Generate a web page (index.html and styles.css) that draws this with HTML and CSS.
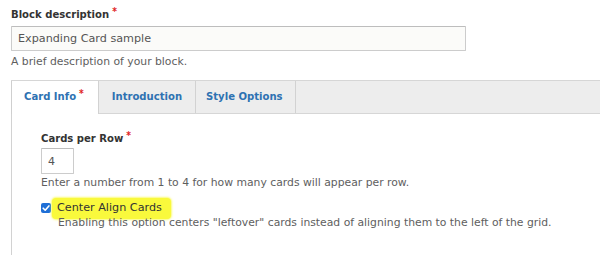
FILE: index.html
```html
<!DOCTYPE html>
<html>
<head>
<meta charset="utf-8">
<link rel="stylesheet" href="styles.css">
</head>
<body>
<div class="page">
  <div class="field">
    <label class="label">Block description<span class="req">*</span></label>
    <input class="text-input" type="text" value="Expanding Card sample">
    <div class="desc">A brief description of your block.</div>
  </div>
  <div class="tabs-wrap">
    <ul class="tabs">
      <li class="tab active"><a class="tab-link">Card Info<span class="req">*</span></a></li>
      <li class="tab tab-2"><a class="tab-link">Introduction</a></li>
      <li class="tab tab-3"><a class="tab-link">Style Options</a></li>
      <li class="tab-fill"></li>
    </ul>
    <div class="panel">
      <label class="label">Cards per Row<span class="req">*</span></label>
      <input class="num-input" type="text" value="4">
      <div class="desc desc-num">Enter a number from 1 to 4 for how many cards will appear per row.</div>
      <div class="check-row">
        <svg class="checkbox" width="10" height="10" viewBox="0 0 10 10">
          <rect x="0" y="0" width="10" height="10" rx="2" fill="#1f6fd6"/>
          <path d="M2.2 5.2 L4.2 7.2 L7.9 2.9" fill="none" stroke="#fff" stroke-width="1.6" stroke-linecap="round" stroke-linejoin="round"/>
        </svg>
        <span class="highlight">Center Align Cards</span>
      </div>
      <div class="desc desc-check">Enabling this option centers "leftover" cards instead of aligning them to the left of the grid.</div>
    </div>
  </div>
</div>
</body>
</html>
```

FILE: styles.css
```css
html, body {
  margin: 0;
  padding: 0;
  background: #ffffff;
}

body {
  width: 600px;
  height: 255px;
  overflow: hidden;
  font-family: "DejaVu Sans", sans-serif;
  color: #333333;
}

.page {
  padding-top: 7px;
}

.field {
  padding-left: 11px;
  display: flex;
  flex-direction: column;
  align-items: flex-start;
}

.label {
  display: block;
  font-family: "DejaVu Sans Condensed", "DejaVu Sans", sans-serif;
  font-stretch: condensed;
  font-weight: bold;
  font-size: 11.2px;
  line-height: 16px;
  color: #333333;
}

.req {
  color: #e0241b;
  font-family: "DejaVu Sans", sans-serif;
  font-weight: bold;
  font-size: 10px;
  margin-left: 3px;
  vertical-align: 3px;
  line-height: 0;
}

.text-input {
  box-sizing: border-box;
  margin: 3px 0 0 0;
  width: 455px;
  height: 25px;
  padding: 0 6px;
  border: 1px solid #cccccc;
  border-top-color: #bdbdbd;
  border-radius: 1px;
  background: #fbfbf9;
  font-family: "DejaVu Sans", sans-serif;
  font-size: 11.2px;
  color: #555555;
  outline: none;
}

.desc {
  margin-top: 4px;
  font-size: 10.8px;
  line-height: 14px;
  color: #5e5e5e;
}

.tabs-wrap {
  margin-top: 11px;
  margin-left: 11px;
}

.tabs {
  list-style: none;
  margin: 0;
  padding: 0;
  display: flex;
  border-top: 1px solid #d6d6d6;
  border-bottom: 1px solid #d6d6d6;
  background: #ededed;
}

.tab {
  height: 32px;
  border-right: 1px solid #d2d2d2;
  display: flex;
  align-items: center;
}

.tab.active {
  background: #ffffff;
  border-left: 1px solid #cfcfcf;
  height: 33px;
  margin-bottom: -1px;
  padding: 0 14px 0 12px;
  align-items: flex-start;
}

.tab-2 {
  padding: 0 13px 0 13px;
}

.tab-3 {
  padding: 0 12px 0 10px;
}

.tab-fill {
  flex: 1;
}

.tab-link {
  font-family: "DejaVu Sans Condensed", "DejaVu Sans", sans-serif;
  font-stretch: condensed;
  font-weight: bold;
  font-size: 11.2px;
  line-height: 32px;
  color: #2e72b2;
  text-decoration: none;
}

.tab-link .req {
  margin-left: 3px;
}

.panel {
  border-left: 1px solid #d2d2d2;
  padding: 17px 0 30px 29px;
  display: flex;
  flex-direction: column;
  align-items: flex-start;
}

.num-input {
  box-sizing: border-box;
  margin: 1px 0 0 0;
  width: 33px;
  height: 26px;
  padding: 0 6px;
  border: 1px solid #cccccc;
  border-top-color: #bdbdbd;
  border-radius: 1px;
  background: #ffffff;
  font-family: "DejaVu Sans", sans-serif;
  font-size: 11px;
  color: #555555;
  outline: none;
}

.desc-num {
  margin-top: 2px;
}

.check-row {
  margin-top: 10px;
  display: flex;
  align-items: center;
  height: 16px;
}

.checkbox {
  display: block;
  flex: none;
  margin-right: 1px;
}

.highlight {
  font-size: 11.2px;
  line-height: 16px;
  color: #333333;
  background: #f9f93c;
  padding: 2px 9px 3px 5px;
  border-radius: 4px;
  box-shadow: 0 0 2px 1px rgba(249, 249, 60, 0.7);
}

.desc-check {
  margin-top: 0;
  padding-left: 17px;
}
```
